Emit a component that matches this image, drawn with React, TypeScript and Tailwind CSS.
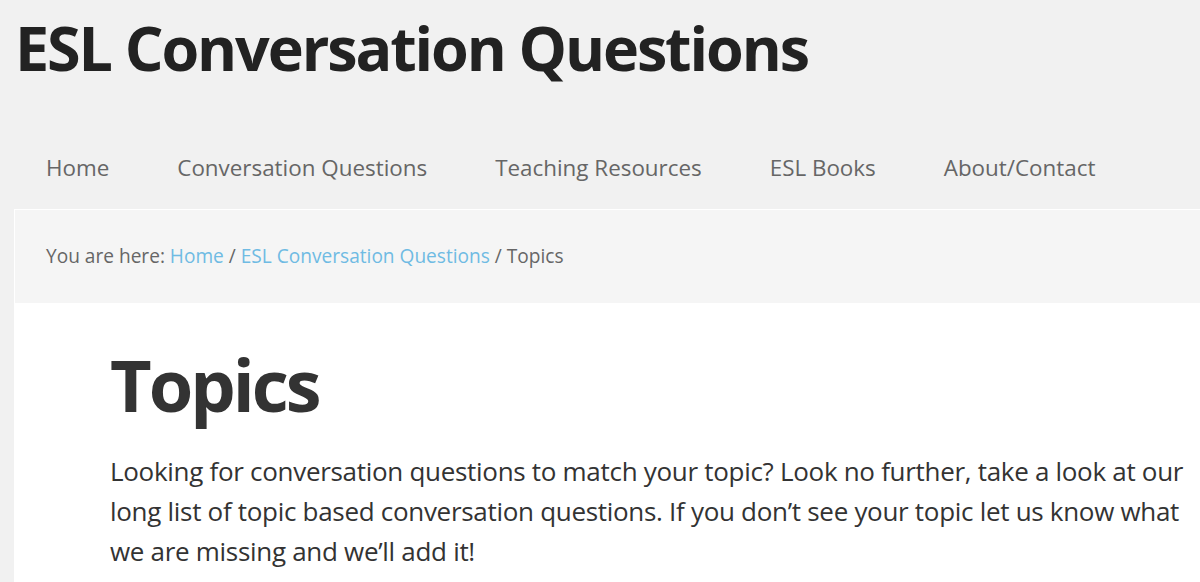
export default function App() {
  return (
    <div className="min-h-[582px] w-[1200px] overflow-hidden bg-[#f1f1f1] text-[#333]" style={{ fontFamily: '"Open Sans", sans-serif' }}>
      {/* Site header */}
      <header className="pl-[15px] pt-[10px] h-[128px]">
        <h1 className="text-[61px] font-bold leading-[76px] tracking-[-2.1px] text-[#222] whitespace-nowrap">ESL Conversation Questions</h1>
      </header>

      {/* Primary nav */}
      <nav className="flex h-[81px] pl-[12px] items-start pt-[15px]">
        {['Home', 'Conversation Questions', 'Teaching Resources', 'ESL Books', 'About/Contact'].map((label) => (
          <a key={label} className="px-[34px] text-[22.4px] leading-[50px] text-[#666] whitespace-nowrap">
            {label}
          </a>
        ))}
      </nav>

      {/* Content */}
      <main className="ml-[14px] border-l border-t border-white">
        <div className="bg-[#f5f5f5] h-[93px] pl-[31px] flex items-center text-[19.1px] text-[#666] whitespace-nowrap">
          You are here:&nbsp;<a className="text-[#6fbbe3]">Home</a>&nbsp;/&nbsp;
          <a className="text-[#6fbbe3]">ESL Conversation Questions</a>&nbsp;/ Topics
        </div>
        <article className="bg-white pl-[95px] pr-[10px] pt-[36px] pb-10">
          <h2 className="text-[72px] font-bold leading-[90px] tracking-[-3px] text-[#333]">Topics</h2>
          <p className="mt-[22px] text-[26px] leading-[40px] tracking-[-0.3px] text-[#333] w-[1090px]">
            Looking for conversation questions to match your topic? Look no further, take a look at our long list of topic based conversation questions. If you don’t see your topic let us know what we are missing and we’ll add it!
          </p>
        </article>
      </main>
    </div>
  );
}
